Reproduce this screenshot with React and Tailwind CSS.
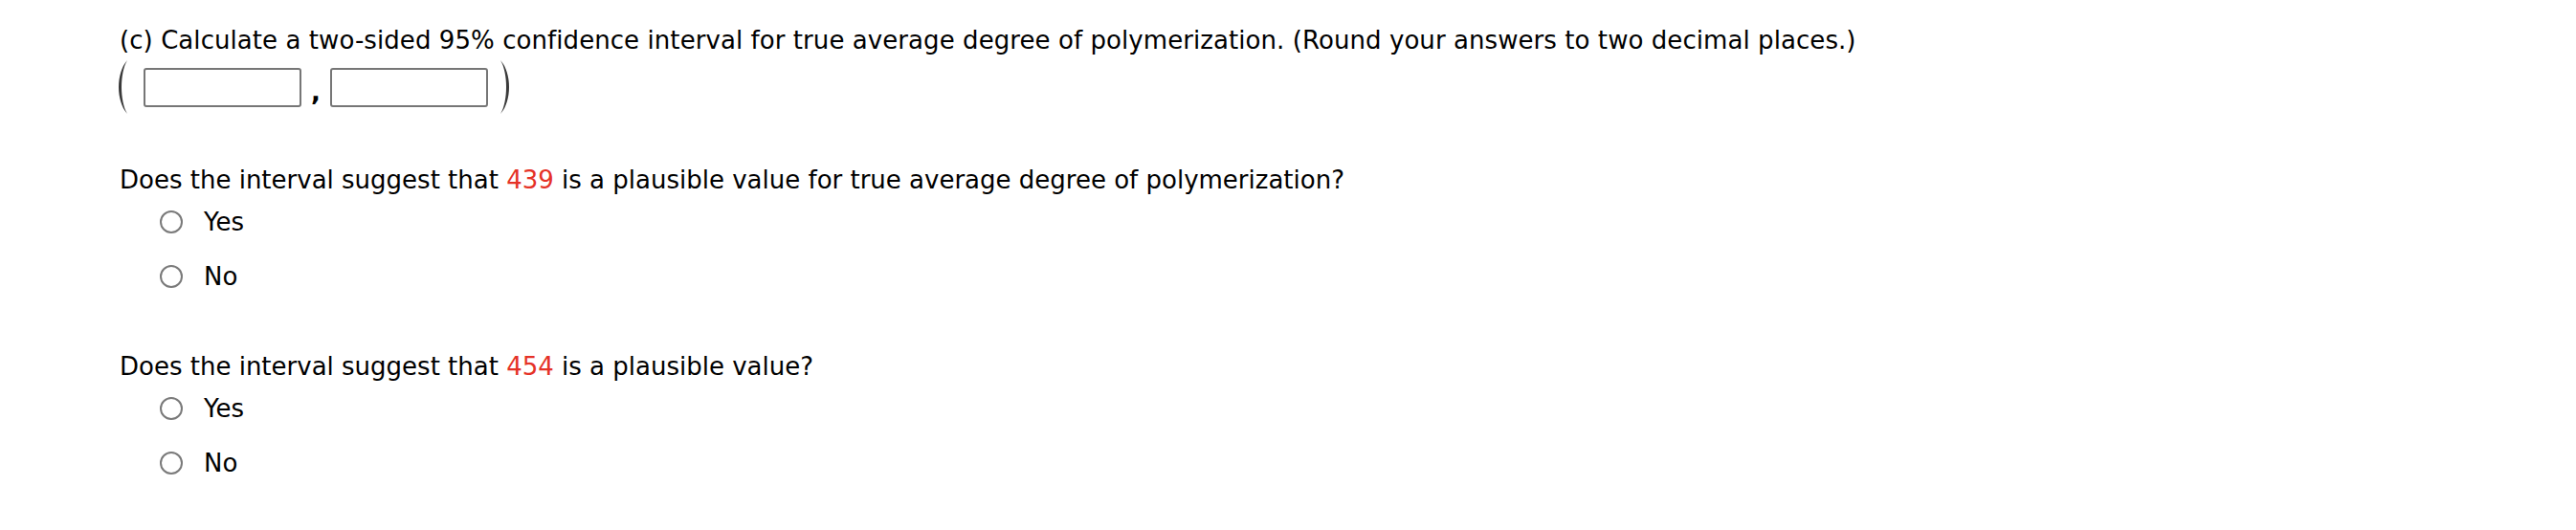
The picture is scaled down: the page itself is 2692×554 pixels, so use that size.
import React from 'react';

const Paren = ({ right = false }) => (
  <svg width="15" height="58" viewBox="0 0 15 58" className={right ? 'scale-x-[-1]' : ''}>
    <path d="M14 1 C2 14 2 44 14 57 C6 44 6 14 14 1 Z" fill="#3a3a3a" />
  </svg>
);

const Radio = ({ label }) => (
  <label className="flex items-center h-[57px]">
    <span className="inline-block w-[24px] h-[24px] rounded-full border-2 border-[#7a7a7a] bg-white" />
    <span className="ml-[22px]">{label}</span>
  </label>
);

export default function App() {
  return (
    <div
      className="min-h-screen bg-white text-black text-[26px] leading-[30px] pl-[125px] pt-[27px]"
      style={{ fontFamily: '"DejaVu Sans", Verdana, sans-serif' }}
    >
      <p className="tracking-[0.07px]">
        (c) Calculate a two-sided 95% confidence interval for true average degree of polymerization. (Round your answers to two decimal places.)
      </p>
      <div className="flex items-center mt-[5px] h-[58px] -ml-[6px]">
        <Paren />
        <input type="text" className="ml-[16px] w-[165px] h-[41px] border-2 border-[#767676] rounded-[3px] bg-white outline-none" />
        <span className="ml-[10px] w-[20px] leading-[26px] translate-y-[5px] font-bold">,</span>
        <input type="text" className="w-[165px] h-[41px] border-2 border-[#767676] rounded-[3px] bg-white outline-none" />
        <span className="ml-[12px] flex"><Paren right /></span>
      </div>

      <div className="mt-[53px]">
        <p>
          Does the interval suggest that <span className="text-[#e53227]">439</span> is a plausible value for true average degree of polymerization?
        </p>
        <div className="pl-[42px]">
          <Radio label="Yes" />
          <Radio label="No" />
        </div>
      </div>

      <div className="mt-[51px]">
        <p>
          Does the interval suggest that <span className="text-[#e53227]">454</span> is a plausible value?
        </p>
        <div className="pl-[42px]">
          <Radio label="Yes" />
          <Radio label="No" />
        </div>
      </div>
    </div>
  );
}
